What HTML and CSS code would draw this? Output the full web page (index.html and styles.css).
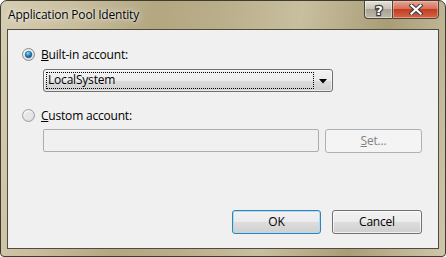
FILE: index.html
```html
<!DOCTYPE html>
<html>
<head>
<meta charset="UTF-8" />
<title>Application Pool Identity</title>
<link rel="stylesheet" href="styles.css">
</head>
<body>
    <div class="window">
        <div class="titlebar">
            <span class="title">Application Pool Identity</span>
            <div class="caption-buttons">
                <div class="cap help">
                    <svg width="12" height="14" viewBox="0 0 12 14">
                        <text x="6" y="12" text-anchor="middle" class="qmark">?</text>
                    </svg>
                </div>
                <div class="cap close">
                    <svg width="14" height="11" viewBox="0 0 14 11">
                        <path d="M2.5 1.5 L11.5 9.5 M11.5 1.5 L2.5 9.5" stroke="#3a3a3a" stroke-width="4.2" stroke-linecap="square" fill="none"/>
                        <path d="M2.5 1.5 L11.5 9.5 M11.5 1.5 L2.5 9.5" stroke="#ffffff" stroke-width="2.2" stroke-linecap="square" fill="none"/>
                    </svg>
                </div>
            </div>
        </div>

        <div class="client">
            <label class="option">
                <svg class="radio" width="13" height="13" viewBox="0 0 13 13">
                    <defs>
                        <radialGradient id="rb" cx="40%" cy="35%" r="70%">
                            <stop offset="0" stop-color="#ffffff"/>
                            <stop offset="1" stop-color="#d4d4d4"/>
                        </radialGradient>
                        <radialGradient id="dot" cx="40%" cy="30%" r="70%">
                            <stop offset="0" stop-color="#8fe3fb"/>
                            <stop offset="0.5" stop-color="#2d8fce"/>
                            <stop offset="1" stop-color="#0e4f82"/>
                        </radialGradient>
                    </defs>
                    <circle cx="6.5" cy="6.5" r="6" fill="url(#rb)" stroke="#8a8a8a"/>
                    <circle cx="6.5" cy="6.5" r="3.3" fill="url(#dot)" stroke="#1c5380" stroke-width="0.6"/>
                </svg>
                <span><u>B</u>uilt-in account:</span>
            </label>

            <div class="combo">
                <div class="combo-focus">LocalSystem</div>
                <div class="combo-arrow">
                    <svg width="8" height="5" viewBox="0 0 8 5"><path d="M0 0 H8 L4 4.5 Z" fill="#000"/></svg>
                </div>
            </div>

            <label class="option second">
                <svg class="radio" width="13" height="13" viewBox="0 0 13 13">
                    <circle cx="6.5" cy="6.5" r="6" fill="url(#rb)" stroke="#a0a0a0"/>
                    <circle cx="6.5" cy="6.5" r="3.5" fill="#e6e6e6"/>
                </svg>
                <span><u>C</u>ustom account:</span>
            </label>

            <div class="account-row">
                <div class="field"></div>
                <div class="btn disabled"><span><u>S</u>et...</span></div>
            </div>

            <div class="footer">
                <div class="btn default">OK</div>
                <div class="btn">Cancel</div>
            </div>
        </div>
    </div>
</body>
</html>
```

FILE: styles.css
```css
html, body{
    width:100%;
    height:100%;
    margin:0px;
    padding:0px;
}
body {
    background: #ffffff;
    font: 12px/15px "Segoe UI", "Open Sans", "Noto Sans", sans-serif;
    letter-spacing:-0.2px;
    color: #000;
}

/* window frame */
.window{
    width:446px;
    height:257px;
    box-sizing:border-box;
    border:1px solid #3e3b30;
    border-radius:7px 7px 4px 4px;
    background: linear-gradient(100deg, #d6ceb3 0%, #c9bf9f 15%, #b3a781 32%, #b9ae8a 45%, #c8bf9f 62%, #a99d77 80%, #cfc7ab 100%);
    display:flex;
    flex-direction:column;
    overflow:hidden;
}
.titlebar{
    height:28px;
    display:flex;
    justify-content:space-between;
    align-items:flex-start;
    padding:0 6px 0 7px;
}
.title{
    margin-top:6px;
    font-size:12px;
    text-shadow: 0 0 6px rgba(255,255,255,0.9), 0 0 2px rgba(255,255,255,0.8);
}
.caption-buttons{
    display:flex;
    margin-top:-1px;
}
.cap{
    height:19px;
    box-sizing:border-box;
    border:1px solid #4a463a;
    display:flex;
    align-items:center;
    justify-content:center;
}
.help{
    width:28px;
    border-right:none;
    border-radius:0 0 0 4px;
    background: linear-gradient(#e4e1d8 0%, #c9c5b9 45%, #a8a394 50%, #bdb8a8 100%);
    box-shadow: inset 0 0 0 1px rgba(255,255,255,0.45);
}
.close{
    width:47px;
    border-radius:0 0 4px 0;
    background: linear-gradient(#e8a493 0%, #d4725a 45%, #c23d20 50%, #d4664a 100%);
    box-shadow: inset 0 0 0 1px rgba(255,210,200,0.45);
}
.qmark{
    font: bold 13px "DejaVu Sans", sans-serif;
    fill:#fff;
    stroke:#3a3a3a;
    stroke-width:2.4px;
    paint-order:stroke;
}

/* client area */
.client{
    flex:1;
    margin:0 6px 7px 6px;
    border:1px solid #4f4b3e;
    background:#f0f0f0;
    padding:18px 16px 14px 14px;
    display:flex;
    flex-direction:column;
}
.option{
    display:flex;
    align-items:center;
    height:13px;
}
.option span{
    margin-left:6px;
    margin-top:-1px;
}
.radio{
    display:block;
}
.second{
    margin-top:17px;
}

.combo{
    margin:8px 0 0 21px;
    width:290px;
    height:23px;
    box-sizing:border-box;
    border:1px solid #707070;
    border-radius:3px;
    background: linear-gradient(#f2f2f2 0%, #ebebeb 50%, #dddddd 51%, #cfcfcf 100%);
    box-shadow: inset 0 0 0 1px rgba(255,255,255,0.6);
    display:flex;
    align-items:center;
    padding:0 0 0 2px;
}
.combo-focus{
    width:268px;
    height:17px;
    box-sizing:border-box;
    border:1px dotted #000;
    padding-left:1px;
    line-height:14px;
}
.combo-arrow{
    flex:1;
    display:flex;
    justify-content:center;
    padding-top:1px;
}
.combo-arrow svg{
    display:block;
}

.account-row{
    display:flex;
    margin:7px 0 0 21px;
    gap:6px;
}
.field{
    width:276px;
    height:23px;
    box-sizing:border-box;
    border:1px solid #adadad;
    border-radius:2px;
    background:#f0f0f0;
}

.btn{
    height:24px;
    box-sizing:border-box;
    border:1px solid #707070;
    border-radius:3px;
    background: linear-gradient(#f2f2f2 0%, #ebebeb 50%, #dddddd 51%, #cfcfcf 100%);
    box-shadow: inset 0 0 0 1px rgba(255,255,255,0.7);
    display:flex;
    align-items:center;
    justify-content:center;
    padding-bottom:1px;
}
.btn.disabled{
    width:97px;
    border-color:#adb2b5;
    background:#f4f4f4;
    color:#838383;
    box-shadow:none;
}
.footer{
    margin-top:auto;
    display:flex;
    justify-content:flex-end;
    gap:11px;
}
.footer .btn{
    width:90px;
}
.footer .btn.default{
    width:89px;
    border-color:#3c7fb1;
    background: linear-gradient(#f2f2f2 0%, #ebebeb 50%, #dddddd 51%, #cfcfcf 100%);
    box-shadow: inset 0 0 0 1px #a7ddf7;
}
```
